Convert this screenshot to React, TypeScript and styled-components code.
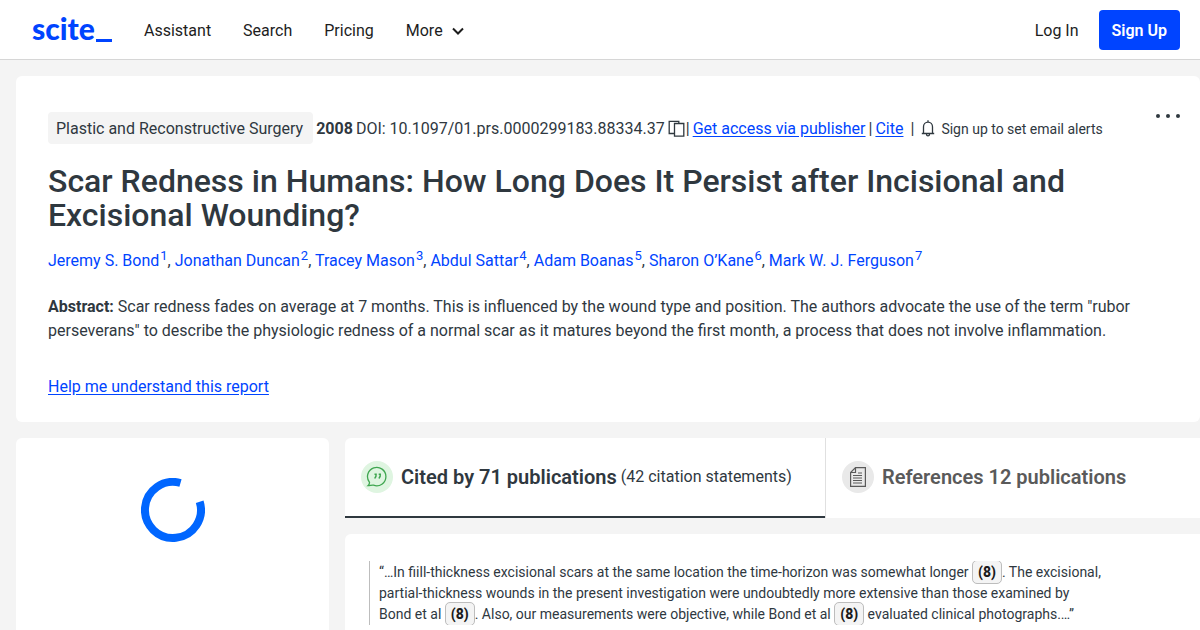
import React from "react";
import styled, { createGlobalStyle } from "styled-components";

const ink = "#2f383f";
const blue = "#0044ff";

const GlobalStyle = createGlobalStyle`
  *, *::before, *::after { box-sizing: border-box; }
  body {
    margin: 0;
    background: #f4f4f4;
    color: ${ink};
    font-family: Roboto, "Liberation Sans", sans-serif;
    font-size: 16px;
    line-height: 24px;
  }
  button { font: inherit; color: inherit; border: 0; background: none; padding: 0; cursor: pointer; }
`;

const Page = styled.div`
  display: flex;
  flex-direction: column;
  min-height: 100vh;
`;

const Header = styled.header`
  display: flex;
  align-items: center;
  justify-content: space-between;
  height: 60px;
  padding: 0 20px 0 32px;
  background: #fff;
  border-bottom: 1px solid #d6d6d6;
  color: #1d1d1d;
`;

const NavGroup = styled.nav<{ $gap: number }>`
  display: flex;
  align-items: center;
  gap: ${(p) => p.$gap}px;
`;

const NavLink = styled.a`
  padding-top: 2px;
  color: inherit;
  text-decoration: none;
`;

const Logo = styled.a`
  display: flex;
  align-items: flex-end;
  width: 80px;
  padding-bottom: 4px;
  color: ${blue};
  font: 900 30px/32px Lato, "Liberation Sans", sans-serif;
  text-decoration: none;

  &::after {
    content: "";
    flex: 1;
    height: 3px;
    margin: 0 0 2px 1px;
    background: ${blue};
  }
`;

const MoreButton = styled.button`
  display: flex;
  align-items: center;
  gap: 8px;
  padding-top: 2px;
`;

const SignUp = styled.button`
  height: 40px;
  padding: 2px 13px 0;
  border-radius: 4px;
  background: ${blue};
  color: #fff;
  font-weight: 600;
`;

const Main = styled.main`
  display: flex;
  flex: 1;
  flex-direction: column;
  gap: 16px;
  padding: 16px 0 0 16px;
`;

const ReportCard = styled.section`
  display: flex;
  flex-direction: column;
  padding: 36px 20px 23px 32px;
  background: #fff;
  border-radius: 6px;
`;

const MetaRow = styled.div`
  display: flex;
  align-items: flex-start;
  justify-content: space-between;
`;

const Meta = styled.div`
  display: flex;
  align-items: center;
  gap: 3px;
  height: 32px;
  padding-top: 2px;
  white-space: nowrap;
`;

const Journal = styled.span`
  margin-top: -2px;
  padding: 5px 10px 3px 8px;
  border-radius: 4px;
  background: #f4f4f4;
`;

const TextLink = styled.a`
  color: ${blue};
  text-decoration: underline;
  text-underline-offset: 2px;
`;

const IconButton = styled.button`
  display: flex;
  align-items: center;
`;

const CopyGroup = styled.span`
  display: flex;
  align-items: center;
  gap: 1px;
`;

const AlertButton = styled.button`
  display: flex;
  align-items: center;
  gap: 6px;
  margin-left: 4px;
  font-size: 14px;
`;

const Divider = styled.span`
  margin-left: 4px;
`;

const Title = styled.h1`
  margin: 20px 0 0;
  font-size: 32px;
  line-height: 34px;
  font-weight: 500;
`;

const Authors = styled.p`
  margin: 17px 0 0;
  a { color: ${blue}; text-decoration: none; }
  sup { margin-left: 1px; font-size: 13px; line-height: 0; }
`;

const Abstract = styled.p`
  margin: 22px 0 32px;
`;

const Columns = styled.div`
  display: grid;
  flex: 1;
  grid-template-columns: 313px minmax(0, 1fr);
  gap: 16px;
`;

const SidePanel = styled.aside`
  display: flex;
  justify-content: center;
  align-items: flex-start;
  padding-top: 40px;
  border-radius: 6px 6px 0 0;
  background: #fff;
`;

const Results = styled.section`
  display: flex;
  flex-direction: column;
  gap: 16px;
`;

const Tabs = styled.div`
  display: grid;
  grid-template-columns: 480px 1fr;
  height: 80px;
  border-radius: 6px 0 0 0;
  background: #fff;
`;

const Tab = styled.button<{ $active?: boolean }>`
  display: flex;
  align-items: center;
  gap: 8px;
  padding: ${(p) => (p.$active ? "0 16px" : "0 16px 2px")};
  border-bottom: ${(p) => (p.$active ? `2px solid ${ink}` : "0")};
  border-left: ${(p) => (p.$active ? "0" : "1px solid #e0e0e0")};
  color: ${(p) => (p.$active ? ink : "#5a5a5a")};
  white-space: nowrap;
`;

const TabTitle = styled.span`
  font-size: 20px;
  font-weight: 600;
`;

const TabIcon = styled.span<{ $tint: string }>`
  display: flex;
  align-items: center;
  justify-content: center;
  width: 32px;
  height: 32px;
  border-radius: 50%;
  background: ${(p) => p.$tint};
`;

const TabText = styled.span`
  display: flex;
  align-items: center;
  gap: 4px;
`;

const Statement = styled.article`
  flex: 1;
  padding: 27px 24px 6px;
  border-radius: 6px 0 0 0;
  background: #fff;
`;

const Quote = styled.blockquote`
  margin: 0;
  padding: 1px 0 0 9px;
  border-left: 1px solid #bdbdbd;
  overflow: hidden;
  font-size: 14px;
  line-height: 21px;
`;

const Line = styled.span`
  display: block;
  white-space: nowrap;
`;

const Ref = styled.a`
  padding: 3px 5px;
  border: 1px solid #bdbdbd;
  border-radius: 5px;
  background: #f4f4f4;
  color: #1a1a1a;
  font-weight: 800;
  text-decoration: none;
`;

const authors = [
  "Jeremy S. Bond",
  "Jonathan Duncan",
  "Tracey Mason",
  "Abdul Sattar",
  "Adam Boanas",
  "Sharon O’Kane",
  "Mark W. J. Ferguson",
];

const Chevron = () => (
  <svg width="14" height="10" viewBox="0 0 14 10" fill="none" stroke="currentColor" strokeWidth="2">
    <path d="M2 2.5 7 7.5 12 2.5" />
  </svg>
);

const CopyIcon = () => (
  <svg width="17" height="18" viewBox="0 0 17 18" fill="none" stroke={ink} strokeWidth="1.3">
    <path d="M6 13.500H1.200V1.300h9.600v2" />
    <path d="M6.500 3.500h9.300v12.700H6.500z" />
  </svg>
);

const BellIcon = () => (
  <svg width="14" height="18" viewBox="0 0 14 18" fill="none" stroke={ink} strokeWidth="1.3">
    <path d="M.8 13.500h12.400M2.500 13.300V6.700a4.500 4.500 0 0 1 9 0V13.300M7 .3v2M5.500 14.200a1.500 1.700 0 0 0 3 0" />
  </svg>
);

const DotsIcon = () => (
  <svg width="24" height="8" viewBox="0 0 24 8" fill={ink}>
    <circle cx="2" cy="4" r="2" />
    <circle cx="12" cy="4" r="2" />
    <circle cx="22" cy="4" r="2" />
  </svg>
);

const QuoteBubble = () => (
  <svg width="22" height="22" viewBox="0 0 22 22" fill="none" stroke="#3fa650" strokeWidth="1.3">
    <path d="M2 19.700c1-.9 1.600-1.900 1.500-3.400A9.200 9.200 0 1 1 7.500 19.200c-1.700-.3-3.500.5-5.500.5Z" />
    <path d="M8.500 8.300h1.600c.2 2-.3 3.300-1.500 4.200M12.700 8.300h1.600c.2 2-.3 3.300-1.500 4.200" strokeWidth="1.500" />
  </svg>
);

const DocumentIcon = () => (
  <svg width="16" height="20" viewBox="0 0 16 20" fill="none" stroke="#5a5a5a">
    <path d="M5.500 .6h9.900v18.800H.6V5.500Z M5.500 .6v4.900H.6" strokeWidth="1.200" />
    <path d="M8 6h4M3 8.500h9M3 11h9M3 13.500h9M3 16h9" strokeWidth="1" />
  </svg>
);

const Spinner = () => (
  <svg width="64" height="64" viewBox="0 0 64 64" fill="none" stroke="#0066ff" strokeWidth="8" role="img" aria-label="Loading">
    <path d="M39.500 5A28 28 0 1 0 58.700 23.700" />
  </svg>
);

export default function App() {
  return (
    <Page>
      <GlobalStyle />
      <Header>
        <NavGroup $gap={32}>
          <Logo href="#" aria-label="scite_">scite</Logo>
          <NavLink href="#">Assistant</NavLink>
          <NavLink href="#">Search</NavLink>
          <NavLink href="#">Pricing</NavLink>
          <MoreButton>More <Chevron /></MoreButton>
        </NavGroup>
        <NavGroup $gap={20}>
          <NavLink href="#">Log In</NavLink>
          <SignUp>Sign Up</SignUp>
        </NavGroup>
      </Header>
      <Main>
        <ReportCard>
          <MetaRow>
            <Meta>
              <Journal>Plastic and Reconstructive Surgery</Journal>
              <b>2008</b>
              <span>DOI: 10.1097/01.prs.0000299183.88334.37</span>
              <CopyGroup>
                <IconButton aria-label="Copy DOI"><CopyIcon /></IconButton>
                <span>|</span>
              </CopyGroup>
              <TextLink href="#">Get access via publisher</TextLink>
              <span>|</span>
              <TextLink href="#">Cite</TextLink>
              <Divider>|</Divider>
              <AlertButton><BellIcon />Sign up to set email alerts</AlertButton>
            </Meta>
            <IconButton aria-label="More actions"><DotsIcon /></IconButton>
          </MetaRow>
          <Title>
            <Line>Scar Redness in Humans: How Long Does It Persist after Incisional and</Line>
            <Line>Excisional Wounding?</Line>
          </Title>
          <Authors>
            {authors.map((name, i) => (
              <React.Fragment key={name}>
                {i > 0 && ", "}
                <a href="#">{name}<sup>{i + 1}</sup></a>
              </React.Fragment>
            ))}
          </Authors>
          <Abstract>
            <Line><b>Abstract:</b> Scar redness fades on average at 7 months. This is influenced by the wound type and position. The authors advocate the use of the term "rubor</Line>
            <Line>perseverans" to describe the physiologic redness of a normal scar as it matures beyond the first month, a process that does not involve inflammation.</Line>
          </Abstract>
          <div><TextLink href="#">Help me understand this report</TextLink></div>
        </ReportCard>
        <Columns>
          <SidePanel><Spinner /></SidePanel>
          <Results>
            <Tabs role="tablist">
              <Tab $active role="tab" aria-selected="true">
                <TabIcon $tint="#dff5e1"><QuoteBubble /></TabIcon>
                <TabText><TabTitle>Cited by 71 publications</TabTitle> (42 citation statements)</TabText>
              </Tab>
              <Tab role="tab" aria-selected="false">
                <TabIcon $tint="#e9e9e9"><DocumentIcon /></TabIcon>
                <TabTitle>References 12 publications</TabTitle>
              </Tab>
            </Tabs>
            <Statement>
              <Quote>
                <Line>“…In fiill-thickness excisional scars at the same location the time-horizon was somewhat longer <Ref href="#">(8)</Ref>. The excisional,</Line>
                <Line>partial-thickness wounds in the present investigation were undoubtedly more extensive than those examined by</Line>
                <Line>Bond et al <Ref href="#">(8)</Ref>. Also, our measurements were objective, while Bond et al <Ref href="#">(8)</Ref> evaluated clinical photographs.…”</Line>
              </Quote>
            </Statement>
          </Results>
        </Columns>
      </Main>
    </Page>
  );
}
